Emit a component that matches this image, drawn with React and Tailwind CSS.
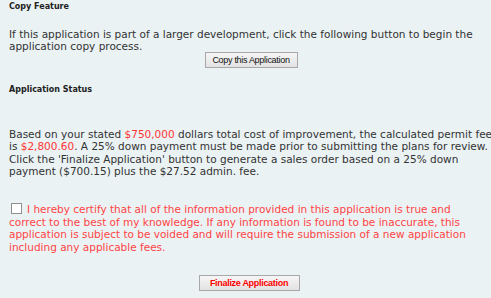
export default function App() {
  const body = { fontFamily: '"DejaVu Sans", Verdana, sans-serif' };
  return (
    <div className="w-[491px] h-[298px] overflow-hidden bg-[#eaf2f4] text-[#333333]" style={body}>
      <div className="px-[9px]">
        <div className="pt-[2px] h-[12px] text-[8px] leading-[10px] font-bold text-[#222]">Copy Feature</div>
        <p className="mt-[16px] text-[10.5px] leading-[12.4px] whitespace-nowrap">
          If this application is part of a larger development, click the following button to begin the<br />
          application copy process.
        </p>
        <div className="flex justify-center pl-[11px] mt-[-1px]">
          <button className="h-[16px] w-[93px] border border-[#a8a8a8] bg-gradient-to-b from-[#f6f6f6] to-[#e2e2e2] text-[9px] leading-[14px] text-[#111] tracking-[-0.3px]" style={{ fontFamily: '"Liberation Sans", Arial, sans-serif' }}>
            Copy this Application
          </button>
        </div>
        <div className="mt-[17px] h-[12px] text-[8px] leading-[10px] font-bold text-[#222]">Application Status</div>
        <p className="mt-[31px] text-[10.5px] leading-[12.4px] whitespace-nowrap">
          Based on your stated <span className="text-[#ff3333]">$750,000</span> dollars total cost of improvement, the calculated permit fee<br />
          is <span className="text-[#ff3333]">$2,800.60</span>. A 25% down payment must be made prior to submitting the plans for review.<br />
          Click the 'Finalize Application' button to generate a sales order based on a 25% down<br />
          payment ($700.15) plus the $27.52 admin. fee.
        </p>
        <p className="mt-[26px] text-[10.5px] leading-[12.4px] whitespace-nowrap text-[#ff4444]">
          <span className="inline-block align-[-1px] w-[11px] h-[11px] border border-[#8f8f8f] bg-white mr-[5px] ml-[2px]"></span>I hereby certify that all of the information provided in this application is true and<br />
          correct to the best of my knowledge. If any information is found to be inaccurate, this<br />
          application is subject to be voided and will require the submission of a new application<br />
          including any applicable fees.
        </p>
        <div className="flex justify-center mt-[22px] pl-[7px]">
          <button className="h-[16px] w-[101px] border border-[#a8a8a8] bg-gradient-to-b from-[#f6f6f6] to-[#e2e2e2] text-[9px] leading-[14px] font-bold text-[#ff0000] tracking-[-0.3px]" style={{ fontFamily: '"Liberation Sans", Arial, sans-serif' }}>
            Finalize Application
          </button>
        </div>
      </div>
    </div>
  );
}
